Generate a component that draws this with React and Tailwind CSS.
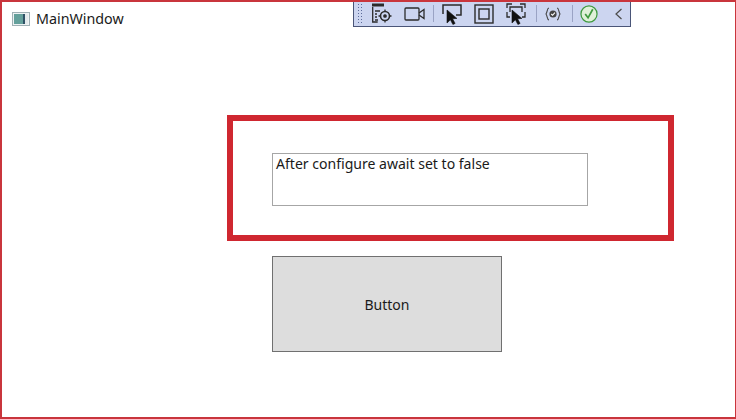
import React from 'react';

function WindowIcon() {
  return (
    <svg width="18" height="14" viewBox="0 0 18 14" className="shrink-0">
      <rect x="0.5" y="0.5" width="17" height="13" fill="#eef2f3" stroke="#9fb0b4" />
      <rect x="2" y="2" width="9" height="10" fill="#64a09b" />
      <rect x="11" y="2" width="2" height="10" fill="#2f5266" />
      <rect x="13" y="2" width="3" height="10" fill="#e4eaec" />
    </svg>
  );
}

function ToolbarIcons() {
  return (
    <div className="flex items-center h-full">
      <div className="w-[5px] h-[22px] ml-[3px] mr-[10px] bg-[radial-gradient(#5b6a99_1px,transparent_1px)] bg-[length:3px_3px]" />
      <svg width="20" height="22" viewBox="0 0 20 22" fill="none" stroke="#2b2b2b" strokeWidth="1.3" className="mr-[12px]">
        <path d="M0 2h12" strokeWidth="3" />
        <path d="M0.700 4v15h5" />
        <path d="M3 8h5M3 11h2M3 14h2M3 17h3" />
        <circle cx="13" cy="13" r="4.500" strokeWidth="1.600" />
        <circle cx="13" cy="13" r="1.200" fill="#2b2b2b" />
        <path d="M13 6.500v2M13 17.500v2M6.500 13h2M17.500 13h2" />
      </svg>
      <svg width="21" height="16" viewBox="0 0 21 16" fill="none" stroke="#2b2b2b" strokeWidth="1.300" className="mr-[8px]">
        <rect x="1" y="2" width="14" height="12" rx="1" />
        <path d="M15 7l5-3.500v9L15 9" />
      </svg>
      <div className="w-px h-[17px] bg-[#9aa3c4] mr-[8px]" />
      <svg width="20" height="22" viewBox="0 0 20 22" fill="none" stroke="#2b2b2b" strokeWidth="1.500" className="mr-[12px]">
        <path d="M1 11V2h18v10h-5" />
        <path d="M5 7l0 13 3.400-3.200 2.500 4.700 2.200-1.100-2.500-4.600 4.300-.4z" fill="#111" stroke="#111" strokeWidth="0.600" />
      </svg>
      <svg width="20" height="20" viewBox="0 0 20 20" fill="none" stroke="#2b2b2b" strokeWidth="1.400" className="mr-[12px]">
        <rect x="1" y="1" width="18" height="18" />
        <rect x="5" y="5" width="10" height="10" />
      </svg>
      <svg width="20" height="22" viewBox="0 0 20 22" fill="none" stroke="#2b2b2b" strokeWidth="1.300" className="mr-[10px]">
        <path d="M1 5V1h5M14 1h5v4M1 9v5h3M19 9v5h-3" />
        <path d="M4 9V4h12v5" />
        <path d="M6 7l0 13 3.400-3.200 2.500 4.700 2.200-1.100-2.500-4.600 4.300-.4z" fill="#111" stroke="#111" strokeWidth="0.600" />
      </svg>
      <div className="w-px h-[17px] bg-[#9aa3c4] mr-[8px]" />
      <svg width="16" height="14" viewBox="0 0 16 14" fill="none" className="mr-[11px]">
        <path d="M4 1C2 1 2.500 5 1 7c1.500 2 1 6 3 6M12 1c2 0 1.500 4 3 6-1.500 2-1 6-3 6" stroke="#444" strokeWidth="1.100" />
        <circle cx="8" cy="7" r="3.600" fill="#444" />
        <path d="M6.300 7l1.300 1.300 2.300-2.600" stroke="#fff" strokeWidth="1.100" />
      </svg>
      <div className="w-px h-[17px] bg-[#9aa3c4] mr-[7px]" />
      <svg width="18" height="18" viewBox="0 0 19 19" fill="none" className="mr-[17px]">
        <circle cx="9.500" cy="9.500" r="8.500" fill="#dff0d8" stroke="#3f9a3f" strokeWidth="1.300" />
        <path d="M5.500 9.500l3 4 5-9" stroke="#3f9a3f" strokeWidth="1.800" />
      </svg>
      <svg width="7" height="12" viewBox="0 0 7 12" fill="none">
        <path d="M6.500 1L1 6l5.500 5" stroke="#4a4a4a" strokeWidth="1.200" />
      </svg>
    </div>
  );
}

export default function App() {
  return (
    <div className="relative w-[736px] h-[419px] overflow-hidden bg-white border-l-2 border-r border-y-2 border-[#c9353c] font-['Noto_Sans',sans-serif] text-[#1a1a1a]">
      <div className="absolute left-[351px] top-[-1px] w-[278px] h-[26px] bg-[#ccd5f0] border-x border-b border-[#4a5578]">
        <ToolbarIcons />
      </div>

      <div className="flex items-center gap-[6px] pl-[10px] h-[34px]">
        <WindowIcon />
        <span className="text-[14.300px] leading-5">MainWindow</span>
      </div>

      <div className="ml-[225px] mt-[79px] w-[447px]">
        <div className="h-[126px] border-[6px] border-[#cf2730] pl-[39px] pt-[32px]">
          <div className="w-[316px] h-[53px] border border-[#a6a6a6] px-[3px] text-[14.050px] leading-[20px]">
            After configure await set to false
          </div>
        </div>
        <button className="block ml-[45px] mt-[15px] w-[230px] h-[96px] bg-[#dddddd] border border-[#707070] text-[14px] text-[#1a1a1a]">
          Button
        </button>
      </div>
    </div>
  );
}
